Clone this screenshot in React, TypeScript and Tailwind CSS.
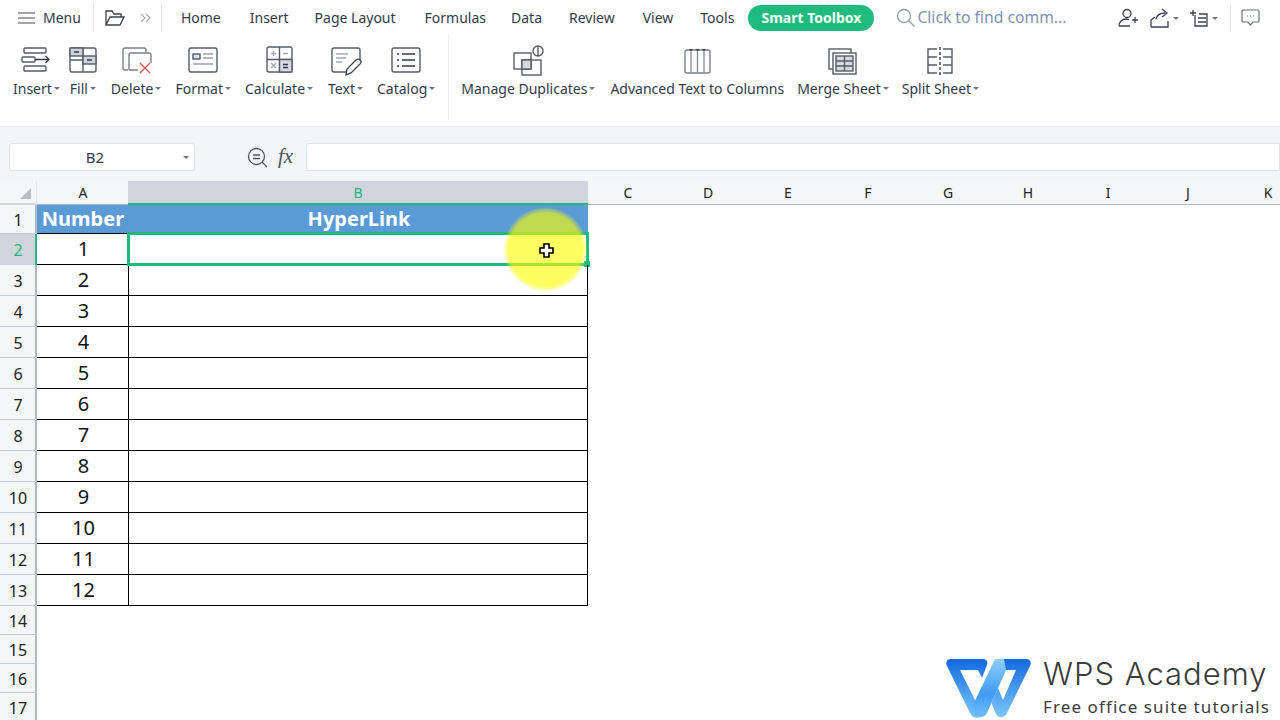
import React from 'react';

const columns = ['C', 'D', 'E', 'F', 'G', 'H', 'I', 'J', 'K'];
const tabs = [
  { label: 'Home', w: 'ml-[19px]' },
  { label: 'Insert', w: 'ml-[29px]' },
  { label: 'Page Layout', w: 'ml-[26px]' },
  { label: 'Formulas', w: 'ml-[29px]' },
  { label: 'Data', w: 'ml-[25px]' },
  { label: 'Review', w: 'ml-[27px]' },
  { label: 'View', w: 'ml-[28px]' },
  { label: 'Tools', w: 'ml-[27px]' },
];

function Caret() {
  return <span className="ml-[2px] mt-[1px] inline-block w-0 h-0 border-x-[3px] border-x-transparent border-t-[3px] border-t-[#6f7480]" />;
}

function Icon({ children }: { children: React.ReactNode }) {
  return (
    <svg width="32" height="32" viewBox="0 0 32 32" fill="none" stroke="#565c68" strokeWidth="1.4">
      {children}
    </svg>
  );
}

const ribbonIcons: Record<string, React.ReactNode> = {
  Insert: (
    <>
      <rect x="4" y="3" width="22" height="5" rx="1" />
      <rect x="2" y="12" width="13" height="5" rx="1" />
      <rect x="4" y="21" width="22" height="5" rx="1" />
      <path d="M15 14.500h14M25.500 11l3.500 3.500-3.500 3.500" stroke="#333a4d" />
    </>
  ),
  Fill: (
    <>
      <rect x="3" y="3" width="26" height="24" rx="2" />
      <path d="M16 3v24M3 15h26" />
      <rect x="3" y="3" width="13" height="8" fill="#cfd2d8" />
      <rect x="16" y="11" width="13" height="8" fill="#cfd2d8" />
      <path d="M7 7h5M20 15h5" stroke="#333a4d" />
    </>
  ),
  Delete: (
    <>
      <path d="M8 25H5a2 2 0 0 1-2-2V5a2 2 0 0 1 2-2h19a2 2 0 0 1 2 2v3" stroke="#7b808a" />
      <path d="M9 25V10a2 2 0 0 1 2-2h18a2 2 0 0 1 2 2v8M9 25h9" stroke="#7b808a" />
      <path d="M20 18l10 10M30 18l-10 10" stroke="#d9544d" />
    </>
  ),
  Format: (
    <>
      <rect x="2" y="3" width="28" height="24" rx="2" />
      <rect x="6" y="9" width="7" height="5" fill="#dfe1e6" />
      <path d="M16 9h10M16 13h10M6 19h20" stroke="#9aa0aa" />
    </>
  ),
  Calculate: (
    <>
      <rect x="4" y="2" width="25" height="25" rx="2" />
      <path d="M16.500 2v25M4 14.500h25" />
      <rect x="16.500" y="14.500" width="12.500" height="12.500" fill="#d7d9de" />
      <path d="M8 8.500h5M10.500 6v5M20 8.500h5M8 18l5 5M13 18l-5 5" stroke="#a5a9b2" />
      <path d="M20 19.500h5M20 22.500h5" stroke="#333a4d" />
    </>
  ),
  Text: (
    <>
      <path d="M17 27H4a2 2 0 0 1-2-2V5a2 2 0 0 1 2-2h24a2 2 0 0 1 2 2v14" />
      <path d="M6 9h12M6 13h10M6 17h6" stroke="#a5a9b2" />
      <path d="M16 30l1-6 9-9a2 2 0 0 1 4 4l-9 9z" fill="#fff" stroke="#444a55" />
    </>
  ),
  Catalog: (
    <>
      <rect x="2" y="3" width="28" height="24" rx="2" />
      <path d="M7 9h2M12 9h13M7 15h2M12 15h13M7 21h2M12 21h13" stroke="#333a4d" />
    </>
  ),
  'Manage Duplicates': (
    <>
      <rect x="2" y="8" width="17" height="16" />
      <rect x="10" y="15" width="19" height="15" />
      <rect x="10" y="15" width="9" height="9" fill="#d7d9de" />
      <circle cx="26" cy="6" r="5" />
      <path d="M26 1v10" />
    </>
  ),
  'Advanced Text to Columns': (
    <>
      <rect x="4" y="5" width="25" height="23" rx="2" stroke="#7b808a" />
      <path d="M10 7v21M16.500 7v21M23 7v21" stroke="#8d929c" />
      <path d="M8 4h4l-2 3zM14.500 4h4l-2 3zM21 4h4l-2 3z" fill="#444a55" stroke="none" />
    </>
  ),
  'Merge Sheet': (
    <>
      <rect x="2" y="4" width="22" height="20" />
      <rect x="6" y="8" width="23" height="21" fill="#fff" />
      <rect x="9" y="11" width="17" height="15" fill="#d7d9de" />
      <path d="M9 16h17M9 21h17M17.500 11v15" />
    </>
  ),
  'Split Sheet': (
    <>
      <path d="M13 4H4v24h9M19 4h9v24h-9" />
      <path d="M4 12h9M4 20h9M19 12h9M19 20h9" />
      <path d="M16 2v28" strokeDasharray="3 2" stroke="#333a4d" />
    </>
  ),
};

function RibbonItem({ label, caret = true, ml }: { label: string; caret?: boolean; ml: string }) {
  return (
    <div className={`${ml} flex flex-col items-center`}>
      <div className="h-[33px] flex items-center justify-center">
        <Icon>{ribbonIcons[label]}</Icon>
      </div>
      <div className="mt-[1px] flex items-center h-[20px] text-[14px] text-[#333a4d] whitespace-nowrap">
        {label}
        {caret && <Caret />}
      </div>
    </div>
  );
}

function RowHeader({ n, selected }: { n: number; selected?: boolean }) {
  return (
    <div
      className={`w-[37px] shrink-0 flex items-center justify-center pl-[1px] pt-[1px] text-[16px] border-r-2 ${
        selected
          ? 'bg-[#d1d4db] text-[#1fb880] border-r-[#1fb880]'
          : 'bg-[#f5f6f8] text-[#222] border-r-[#aeb6cb] border-b border-b-[#c3c8d6]'
      }`}
    >
      {n}
    </div>
  );
}

function DataRow({ n }: { n: number }) {
  const selected = n === 1;
  return (
    <div className="flex h-[31px]">
      <RowHeader n={n + 1} selected={selected} />
      <div className="w-[92px] shrink-0 flex items-center justify-center pl-[2px] text-[20px] text-[#111] border-b border-black border-r">
        {n}
      </div>
      <div className="w-[459px] shrink-0 relative border-b border-black border-r">
        {selected && (
          <div className="absolute left-[-2px] top-[-2px] w-[462px] h-[34px] border-[3px] border-[#1fb880]">
            <span className="absolute right-[-4px] bottom-[-4px] w-[6px] h-[6px] bg-[#1fb880]" />
          </div>
        )}
      </div>
    </div>
  );
}

export default function App() {
  return (
    <div className="relative w-[1280px] h-[720px] overflow-hidden bg-white font-['Noto_Sans',sans-serif] text-[#333a4d]">
      {/* Top menu */}
      <div className="h-[35px] flex items-center text-[14px]">
        <svg className="ml-[18px]" width="18" height="14" viewBox="0 0 18 14" stroke="#444a55" strokeWidth="1.2">
          <path d="M0 2h17M0 7h17M0 12h17" />
        </svg>
        <span className="ml-[7px]">Menu</span>
        <div className="ml-[12px] w-px h-[29px] bg-[#e3e5e9]" />
        <svg className="ml-[10px]" width="21" height="18" viewBox="0 0 21 18" fill="none" stroke="#3c424e" strokeWidth="1.3">
          <path d="M2 16V2h6l2 3h7v3M2 16h14l4-8H6z" />
        </svg>
        <svg className="ml-[15px]" width="12" height="10" viewBox="0 0 12 10" fill="none" stroke="#a5a9b2" strokeWidth="1.1">
          <path d="M1 1l4 4-4 4M6 1l4 4-4 4" />
        </svg>
        <div className="ml-[9px] w-px h-[29px] bg-[#e3e5e9]" />
        {tabs.map((t) => (
          <span key={t.label} className={`${t.w} whitespace-nowrap`}>
            {t.label}
          </span>
        ))}
        <span className="ml-[14px] w-[126px] h-[26px] rounded-full bg-[#1fba7e] text-white font-bold flex items-center justify-center whitespace-nowrap">
          Smart Toolbox
        </span>
        <svg className="ml-[22px]" width="19" height="19" viewBox="0 0 19 19" fill="none" stroke="#8f99ad" strokeWidth="1.3">
          <circle cx="8" cy="8" r="6.500" />
          <path d="M12.500 12.500l6 6" />
        </svg>
        <span className="ml-[2px] text-[15.700px] text-[#8093b3] whitespace-nowrap">Click to find comm...</span>
        <svg className="ml-[51px]" width="22" height="20" viewBox="0 0 22 20" fill="none" stroke="#3c424e" strokeWidth="1.3">
          <circle cx="10" cy="5.500" r="4" />
          <path d="M2 18c0-4 3-7 7-7 1 0 2 .2 3 .6M2 18h11M15 12h6M18 9v6" />
        </svg>
        <svg className="ml-[10px]" width="22" height="20" viewBox="0 0 22 20" fill="none" stroke="#3c424e" strokeWidth="1.3">
          <path d="M2 19v-7l4-3M19 13v6H2M7 11c1-4 4-6 9-6M13 1l5 4-5 4" />
        </svg>
        <Caret />
        <svg className="ml-[11px]" width="20" height="20" viewBox="0 0 20 20" fill="none" stroke="#3c424e" strokeWidth="1.3">
          <path d="M5 7v11h12V6H9M0 5h6M3 2v6M8 10h8M8 14h8" />
        </svg>
        <Caret />
        <div className="ml-[12px] w-px h-[26px] bg-[#e3e5e9]" />
        <svg className="ml-[10px]" width="19" height="18" viewBox="0 0 19 18" fill="none" stroke="#6a707c" strokeWidth="1.2">
          <path d="M2 1h15a1 1 0 0 1 1 1v10a1 1 0 0 1-1 1h-5l-2.500 3L7 13H2a1 1 0 0 1-1-1V2a1 1 0 0 1 1-1z" />
          <path d="M6 7h1M9 7h1M12 7h1" />
        </svg>
      </div>

      {/* Ribbon */}
      <div className="h-[92px] flex items-start border-b border-[#e6e8ec] shadow-[0_1px_3px_rgba(0,0,0,0.06)]">
        <div className="flex pt-[9px]">
          <RibbonItem label="Insert" ml="ml-[13px]" />
          <RibbonItem label="Fill" ml="ml-[7px]" />
          <RibbonItem label="Delete" ml="ml-[12px]" />
          <RibbonItem label="Format" ml="ml-[14px]" />
          <RibbonItem label="Calculate" ml="ml-[14px]" />
          <RibbonItem label="Text" ml="ml-[15px]" />
          <RibbonItem label="Catalog" ml="ml-[14px]" />
        </div>
        <div className="ml-[13px] w-px h-[85px] bg-[#eceef1]" />
        <div className="flex pt-[9px]">
          <RibbonItem label="Manage Duplicates" ml="ml-[12px]" />
          <RibbonItem label="Advanced Text to Columns" caret={false} ml="ml-[15px]" />
          <RibbonItem label="Merge Sheet" ml="ml-[13px]" />
          <RibbonItem label="Split Sheet" ml="ml-[13px]" />
        </div>
      </div>

      {/* Formula bar */}
      <div className="h-[54px] bg-[#f3f5f8] flex items-center pt-[6px] pl-[9px]">
        <div className="relative w-[186px] h-[28px] bg-white border border-[#e1e4e9] rounded-[3px] flex items-center justify-center pr-[14px] text-[15px]">
          B2
          <span className="absolute right-[5px] top-[12px] w-0 h-0 border-x-[3px] border-x-transparent border-t-[3px] border-t-[#6f7480]" />
        </div>
        <svg className="ml-[52px]" width="21" height="21" viewBox="0 0 21 21" fill="none" stroke="#50565f" strokeWidth="1.3">
          <circle cx="9.500" cy="9.500" r="8" />
          <path d="M6 8h7M6 11.500h7M15 15l5 5" />
        </svg>
        <span className="ml-[10px] w-[22px] font-['Liberation_Serif',serif] italic text-[21px] text-[#50565f]">fx</span>
        <div className="ml-[6px] flex-1 h-[28px] bg-white border border-[#e1e4e9] rounded-l-[3px]" />
      </div>

      {/* Column headers */}
      <div className="flex h-[24px] overflow-hidden bg-[#f5f6f8] text-[14px] text-[#222]">
        <div className="w-[37px] shrink-0 relative border-r border-[#e1e4e9] border-b-2 border-b-[#d5d8e0]">
          <span className="absolute right-[5px] bottom-[4px] w-0 h-0 border-l-[11px] border-l-transparent border-b-[11px] border-b-[#b9bcc2]" />
        </div>
        <div className="w-[91px] shrink-0 flex items-center justify-center pl-[1px] border-b border-[#aeb6cb]">A</div>
        <div className="w-[460px] shrink-0 flex items-center justify-center bg-[#d1d4db] text-[#1fb880] border-b-2 border-[#1fb880]">B</div>
        {columns.map((c) => (
          <div key={c} className="w-[80px] shrink-0 flex items-center justify-center border-b border-[#aeb6cb]">
            {c}
          </div>
        ))}
      </div>

      {/* Sheet */}
      <div className="flex h-[29px]">
        <RowHeader n={1} />
        <div className="w-[91px] shrink-0 bg-[#5b9bd5] text-white font-bold text-[20px] flex items-center justify-center pb-[1px] pl-[1px] border-b border-black whitespace-nowrap">
          Number
        </div>
        <div className="w-[460px] shrink-0 bg-[#5b9bd5] text-white font-bold text-[20px] flex items-center justify-center pb-[2px] pl-[2px]">
          HyperLink
        </div>
      </div>
      {[1, 2, 3, 4, 5, 6, 7, 8, 9, 10, 11, 12].map((n) => (
        <DataRow key={n} n={n} />
      ))}
      {[14, 15, 16, 17].map((n) => (
        <div key={n} className="flex h-[29px]">
          <RowHeader n={n} />
        </div>
      ))}

      {/* Mouse highlight */}
      <div className="absolute left-[503px] top-[207px] w-[85px] h-[85px] rounded-full bg-[radial-gradient(circle_closest-side,rgba(255,255,0,0.62)_0%,rgba(255,255,0,0.62)_86%,rgba(255,255,0,0.3)_94%,rgba(255,255,0,0)_100%)]" />
      <svg className="absolute left-[539px] top-[243px]" width="15" height="15" viewBox="0 0 15 15">
        <path d="M5 1h5v4h4v5h-4v4H5v-4H1V5h4z" fill="#fff" stroke="#000" strokeWidth="1.6" />
      </svg>

      {/* Watermark */}
      <div className="absolute left-[946px] top-[659px] flex">
        <svg width="86" height="60" viewBox="0 0 86 60">
          <defs>
            <linearGradient id="wpsDark" x1="0" y1="0" x2="0" y2="1">
              <stop offset="0" stopColor="#1468e0" />
              <stop offset="1" stopColor="#7cc8fb" />
            </linearGradient>
            <linearGradient id="wpsLight" x1="0" y1="0" x2="0" y2="1">
              <stop offset="0" stopColor="#8ed0fc" />
              <stop offset="0.6" stopColor="#3f9bf2" />
              <stop offset="1" stopColor="#6fc0fa" />
            </linearGradient>
          </defs>
          <path d="M5 0H37C41 0 42 3 41 6L36 19 32 11H14L29 41 36 56C33 60 27 60 24 54L1 7C-1 3 1 0 5 0Z" fill="url(#wpsDark)" />
          <path d="M49 0H65L41 54C39 58 35 59 31 58 29 57 28 56 27 53L26 48Z" fill="url(#wpsLight)" />
          <path d="M58 0H80C84 0 86 3 84 7L61 54C58 60 52 59 50 55L45.500 44 52 29 57 41 70 11H60Z" fill="url(#wpsDark)" />
        </svg>
        <div className="ml-[11px] mt-[-2px] text-[#3c3c3c]">
          <div className="font-['Inter',sans-serif] font-light text-[31px] leading-[34px] tracking-[1px] whitespace-nowrap">WPS Academy</div>
          <div className="mt-[3px] font-['Noto_Sans',sans-serif] text-[17px] leading-[26px] tracking-[1.100px] whitespace-nowrap">Free office suite tutorials</div>
        </div>
      </div>
    </div>
  );
}
